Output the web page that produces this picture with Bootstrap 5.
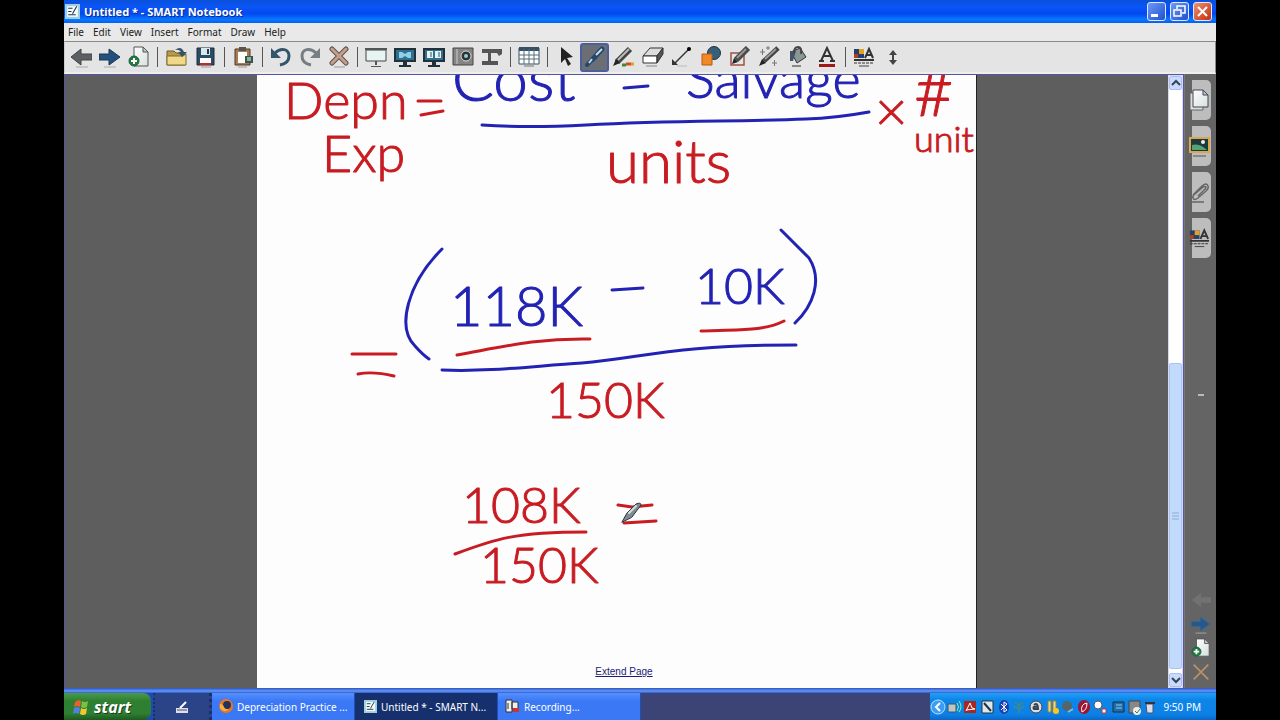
<!DOCTYPE html>
<html lang="en">
<head>
<meta charset="utf-8">
<meta name="viewport" content="width=device-width, initial-scale=1">
<title>Untitled * - SMART Notebook</title>
<link href="https://cdn.jsdelivr.net/npm/bootstrap@5.3.0/dist/css/bootstrap.min.css" rel="stylesheet">
<style>
body{background:#000;font-family:"Open Sans","Liberation Sans",sans-serif;font-size:11px;line-height:16px;padding:0 5%}
button{border:0;padding:0;background:none}
svg{display:block;flex:none}
.titlebar{height:23px;background:linear-gradient(#0a50d8,#0a55f8 30%,#0348f0 60%,#0878ff 85%,#0560f0);color:#fff;padding-left:1px}
.titlebar h1{font:bold 11px/16px "Noto Sans",sans-serif;text-shadow:1px 1px #0a2a90}
.winbtn{width:19px;height:19px;border:1px solid #dfe9ff;border-radius:3px;background:linear-gradient(135deg,#6c9af8,#1f4fd0)}
.winbtn.shut{background:linear-gradient(135deg,#f09070,#c03010)}
.menus{height:18px;background:#e9e9e9;padding-left:4px;gap:9px}
.menus a{color:#222;font:10px/16px "Noto Sans",sans-serif;text-decoration:none}
.toolbar{height:33px;background:#e4e4e4;border:1px solid #8a8a8a;border-left-color:#ccc;border-bottom:2px solid #eee;padding-left:1px}
.tool{width:29px;height:29px;display:flex;align-items:center;justify-content:center;flex:none}
.tool.on{background:#6b6e74;border:2px solid #4a5f9c;border-radius:3px}
.divide{width:8px;flex:none;display:flex;justify-content:center}
.divide.wide{width:9px}
.divide::before{content:"";width:1px;height:20px;background:#555}
.desk{background:#5e5e5e;border:1px solid #5855a5;border-bottom:0}
.sheet{width:720px;background:#fdfdfd;padding-left:16px;border-right:1px solid #222}
.sheet a{color:#1c1c74;font:10px/14px "Liberation Sans",sans-serif;margin-bottom:9px;z-index:1}
.ink{position:absolute;inset:0}
.ink text{font-family:Lato,sans-serif;font-weight:300;stroke-width:1}
.ink .red{fill:#c81c22;stroke:#c81c22}
.ink .blue{fill:#2222b4;stroke:#2222b4}
.scroller{width:15px;background:#fff;border:1px solid #d8d8e8}
.scroller button{width:13px;height:14px;background:#c9dafd;border:1px solid #a8bdf0;border-radius:2px}
.before{flex:275}.thumb{flex:307;background:#c2dafc;border:1px solid #a8c4f5;border-radius:2px}
.side{width:32px;background:#646464;border-left:1px solid #777}
.tabs{gap:6px;padding-top:6px}
.pager{gap:4px;padding:0 5px 6px 0}
.tab{width:19px;height:40px;background:#bdbdbd;border-radius:0 5px 5px 0;margin-right:5px;display:flex;align-items:center;justify-content:flex-end}
.tab svg{margin-right:1px}
.before-grip{flex:136}.after-grip{flex:195}
.grip{width:6px;height:2px;background:#bbb;margin-right:12px}
.taskbar{height:32px;background:linear-gradient(#3560c8 0 1px,#5a8af0 2px 4px,#1c4bb8 5px,#1c4bb8);padding-top:5px;color:#fff}
.start{width:87px;background:linear-gradient(#4a9a4a,#2f7f32 30%,#2f7f32 75%,#1c5a20);border-radius:0 8px 8px 0;color:#fff;font:italic bold 16px/20px "Open Sans",sans-serif;text-shadow:1px 1px #184018}
.quick{width:59px;background:#2b4488;border-left:2px dotted #173070;border-right:3px dotted #173070;margin-left:2px}
.task{width:143px;color:#fff;padding-left:7px;gap:4px;background:linear-gradient(#5590ff,#3b78f5 30%,#3b78f5);font:10px/16px "Noto Sans",sans-serif;border-right:1px solid #2050b8}
.task.now{background:#16306e;padding-left:9px}
.rest{background:#3b4474}
.tray{width:286px;background:linear-gradient(#20a0f8,#0d86e8 25%,#0d80e6 80%,#0a68c8);font:10px/16px "Noto Sans",sans-serif;padding-right:15px}
</style>
</head>
<body class="vh-100 d-flex flex-column overflow-hidden">
<svg width="0" height="0" class="position-absolute" aria-hidden="true">
 <defs>
  <linearGradient id="pg" x2="1" y2="1"><stop stop-color="#fff"/><stop offset="1" stop-color="#d5e0dc"/></linearGradient>
  <symbol id="note" viewBox="0 0 14 14"><path fill="#9dd0dc" d="M0 0h14v14H0z"/><path fill="#f4fbfb" d="M2 2h10v10H2z"/><path fill="none" stroke="#234" stroke-width="1" d="M3 4h4M3 7h3M3 10h7M11 2 7 9"/></symbol>
  <symbol id="arrow" viewBox="0 0 22 22"><path d="M0 8h10V3l11 8-11 8v-5H0z"/><path d="M5 21h12" stroke="#aaa"/></symbol>
  <symbol id="addpage" viewBox="0 0 22 22"><path fill="url(#pg)" stroke="#555" d="M6 1h9l5 5v14H6z"/><path fill="#ccc" stroke="#555" d="M15 1v5h5z"/><circle cx="6" cy="15" r="5" fill="#24783a" stroke="#164"/><path stroke="#fff" stroke-width="2" d="M3 15h6M6 12v6"/></symbol>
  <symbol id="cross" viewBox="0 0 22 22"><path d="m4 3 14 14M18 3 4 17" stroke="#665048" stroke-width="5" stroke-linecap="round"/><path d="m4 3 14 14M18 3 4 17" stroke="#c2a090" stroke-width="3" stroke-linecap="round"/><path d="M6 21h11" stroke="#999"/></symbol>
  <symbol id="props" viewBox="0 0 22 22"><path fill="#24406c" d="M1 3h10v9H1z"/><path fill="#e8a020" d="M6 3h5v5H6z"/><path fill="#b04020" d="M1 8h4v4H1z"/><path fill="none" stroke="#333" stroke-width="2" d="m12 12 4-9 4 9M14 9h5M1 14h20"/><path stroke="#333" stroke-dasharray="3 1" d="M1 17h20"/><path stroke="#444" d="M6 20h10"/></symbol>
  <symbol id="screen" viewBox="0 0 22 22"><path fill="#22303a" d="M0 2h22v14H0zM9 16h4v3H9zM5 19h12v2H5z"/><path fill="#2f7090" d="M2 4h18v10H2z"/></symbol>
 </defs>
</svg>

<header class="titlebar d-flex align-items-center">
 <svg width="15" height="15" class="me-1"><use href="#note"/></svg>
 <h1 class="m-0 flex-grow-1">Untitled * - SMART Notebook</h1>
 <div class="d-flex gap-1 me-1">
  <button class="winbtn" aria-label="Minimize"><svg width="17" height="17"><path fill="#fff" d="M3 11h7v3H3z"/></svg></button>
  <button class="winbtn" aria-label="Restore"><svg width="17" height="17" fill="none" stroke="#fff" stroke-width="1.5"><path d="M6 6V3h8v7h-3M3 7h7v6H3z"/></svg></button>
  <button class="winbtn shut" aria-label="Close"><svg width="17" height="17" stroke="#fff" stroke-width="2"><path d="m4 4 9 9M13 4l-9 9"/></svg></button>
 </div>
</header>
<nav class="menus d-flex align-items-center"><a href="#">File</a><a href="#">Edit</a><a href="#">View</a><a href="#">Insert</a><a href="#">Format</a><a href="#">Draw</a><a href="#">Help</a></nav>

<div class="toolbar d-flex align-items-center" role="toolbar" aria-label="Tools">
 <button class="tool" aria-label="Previous page"><svg width="22" height="22" viewBox="0 0 22 22" fill="#5c6064" stroke="#444"><path d="M22 8H11V3L1 11l10 8v-5h11z"/><path d="M6 21h12" stroke="#aaa"/></svg></button>
 <button class="tool" aria-label="Next page"><svg width="22" height="22" fill="#24507c" stroke="#183858"><use href="#arrow"/></svg></button>
 <button class="tool" aria-label="Add page"><svg width="22" height="22"><use href="#addpage"/></svg></button>
 <span class="divide wide"></span>
 <button class="tool" aria-label="Open"><svg width="22" height="22"><path fill="#b99a48" stroke="#6b5a28" d="M1 5h7l2 2h9v12H1z"/><path fill="#f0d888" stroke="#806a30" d="M1 10h16l3-2v11H1z"/><path fill="#355266" d="M9 4q6-5 9 2h3l-5 5-4-5h3q-2-3-6-2z"/></svg></button>
 <button class="tool" aria-label="Save"><svg width="22" height="22"><path fill="#2c4c66" stroke="#182c40" d="M2 2h17v17H2z"/><path fill="#dbe8ea" d="M6 2h9v7H6z"/><path fill="#23394a" d="M12 3h2v5h-2z"/><path fill="#fff" d="M5 12h11v7H5z"/><path fill="#c22" d="M5 17h11v2H5z"/><path d="M6 21h10" stroke="#999"/></svg></button>
 <span class="divide wide"></span>
 <button class="tool" aria-label="Paste"><svg width="22" height="22"><path fill="#a87c50" stroke="#4a3a2a" d="M2 3h15v16H2z"/><path fill="#fff" d="M5 6h9v11H5z"/><path fill="#555" d="M6 1h7v4H6z"/><path fill="#35584e" d="M12 10h8v7h-8z"/><path stroke="#fff" d="M14 14h4M14 12h4"/><path d="M5 21h9" stroke="#999"/></svg></button>
 <span class="divide"></span>
 <button class="tool" aria-label="Undo"><svg width="22" height="22" fill="none"><path d="M5 7C11 1 19 3 19 10c0 5-4 8-9 9" stroke="#34566c" stroke-width="3"/><path fill="#34566c" d="M1 2v10h10z"/></svg></button>
 <button class="tool" aria-label="Redo"><svg width="22" height="22" fill="none"><path d="M17 7C11 1 3 3 3 10c0 5 4 8 9 9" stroke="#777d80" stroke-width="3"/><path fill="#777d80" d="M21 2v10H11z"/></svg></button>
 <button class="tool" aria-label="Delete"><svg width="22" height="22"><use href="#cross"/></svg></button>
 <span class="divide"></span>
 <button class="tool" aria-label="Screen shade"><svg width="22" height="22"><path fill="#e6f4f2" stroke="#444" d="M1 4h20v11H1z"/><path fill="#555" d="M0 2h22v2H0zM10 15h2v4h-2zM6 20h10v1H6z"/></svg></button>
 <button class="tool" aria-label="Full screen"><svg width="22" height="22"><use href="#screen"/><path fill="#8fd0e4" d="M5 6h12v6H5z"/><path fill="#2f7090" d="M8 6h6l-3 2zM8 12h6l-3-2z"/></svg></button>
 <button class="tool" aria-label="Dual page"><svg width="22" height="22"><use href="#screen"/><path fill="#e8f4f4" d="M4 5h6v7H4zM12 5h6v7h-6z"/><path stroke="#256" d="M8 6v5M16 6v5"/></svg></button>
 <button class="tool" aria-label="Screen capture"><svg width="22" height="22"><path fill="#858585" stroke="#444" d="M1 2h20v17H1z"/><path stroke="#ccc" d="M5 3v15"/><circle cx="14" cy="10" r="5" fill="#2b3238" stroke="#ddd"/><circle cx="14" cy="10" r="2" fill="#9cc"/></svg></button>
 <button class="tool" aria-label="Document camera"><svg width="22" height="22" fill="#555"><path d="M1 3h20v5l-3 2-2-3h-6v8h7v4H1v-4h6V7H1z"/></svg></button>
 <span class="divide"></span>
 <button class="tool" aria-label="Table"><svg width="22" height="22"><path fill="#fff" stroke="#355064" d="M1 2h20v16H1z"/><path fill="#355064" d="M1 1h20v4H1z"/><path stroke="#55707c" d="M1 9h20M1 13h20M6 3v15M11 3v15M16 3v15"/><path d="M6 20h10" stroke="#777"/></svg></button>
 <span class="divide"></span>
 <button class="tool" aria-label="Select"><svg width="22" height="22"><path fill="#222" d="m6 1 12 10-6 1 4 6-3 2-3-7-4 4z"/></svg></button>
 <button class="tool on" aria-label="Pens" aria-pressed="true"><svg width="22" height="22"><path d="M3 19 9 13" stroke="#24486c" stroke-width="4" stroke-linecap="round"/><path d="M9 13 18 3" stroke="#24486c" stroke-width="5" stroke-linecap="round"/><path d="m5 17 3-4M12 9l6-6" stroke="#c8d8e4" stroke-width="2"/></svg></button>
 <button class="tool" aria-label="Creative pens"><svg width="22" height="22"><path d="m4 16 13-13" stroke="#444" stroke-width="6"/><path d="m5 14 11-11" stroke="#bbb" stroke-width="2"/><path fill="#222" d="m0 20 3-7 4 4z"/><path d="M9 19h4" stroke="#3a8a3a" stroke-width="3"/><path d="M13 18h5" stroke="#d05020" stroke-width="3"/><path d="M18 18h3" stroke="#e0a020" stroke-width="3"/></svg></button>
 <button class="tool" aria-label="Eraser"><svg width="22" height="22" stroke="#333"><path fill="#ddd" d="M8 2h13l-6 8H1z"/><path fill="#fff" d="M1 10h14v7H1z"/><path fill="#555" d="m15 10 6-8v6l-6 9z"/><path d="M4 20h11" stroke="#888"/></svg></button>
 <button class="tool" aria-label="Lines"><svg width="22" height="22"><path d="M4 17 18 3" stroke="#333" stroke-width="1.5"/><circle cx="18" cy="3" r="2"/><path d="M1 19v-6l6 6z" fill="#333"/><path d="M6 20h10" stroke="#bbb"/></svg></button>
 <button class="tool" aria-label="Shapes"><svg width="22" height="22"><circle cx="14" cy="7" r="6.500" fill="#35607a" stroke="#234"/><path fill="#f08a28" stroke="#b85a10" d="M2 8h10v11H2z"/></svg></button>
 <button class="tool" aria-label="Shape recognition pen"><svg width="22" height="22"><path fill="none" stroke="#a05040" stroke-width="1.500" d="M2 7h13v12H2z"/><path d="M7 14 19 2" stroke="#4a4a4a" stroke-width="6"/><path d="m8 12 9-9" stroke="#999" stroke-width="2"/><path fill="#222" d="m3 18 2-6 4 4z"/></svg></button>
 <button class="tool" aria-label="Magic pen"><svg width="22" height="22"><path d="M6 15 20 2" stroke="#444" stroke-width="5"/><path d="m7 13 11-10" stroke="#999" stroke-width="2"/><path fill="#222" d="m1 20 3-7 4 4z"/><path fill="none" stroke="#777" d="M2 6h5M4.500 3v6M8 2h4M10 0v4M14 17h5M16.500 14v6"/></svg></button>
 <button class="tool" aria-label="Fill"><svg width="22" height="22"><path fill="#8b9699" stroke="#333" d="m4 6 9-4 6 9-9 6z"/><path fill="#456" d="M3 5h6l-3 10H3z"/><path fill="none" stroke="#444" stroke-width="2" d="M7 7Q7 1 11 1t3 7"/><path d="M5 20h9" stroke="#888" stroke-width="2"/></svg></button>
 <button class="tool" aria-label="Text"><svg width="22" height="22"><path fill="none" stroke="#333" stroke-width="2" d="m5 15 6-13 6 13M8 10h7M3 15h5M14 15h5"/><path fill="#a01818" d="M3 18h16v3H3z"/></svg></button>
 <span class="divide"></span>
 <button class="tool" aria-label="Properties"><svg width="22" height="22"><use href="#props"/></svg></button>
 <button class="tool" aria-label="Move toolbar"><svg width="22" height="22" fill="#444"><path d="m11 4 4 5h-3v5h3l-4 5-4-5h3V9H7z"/></svg></button>
</div>

<main class="flex-grow-1 d-flex" style="min-height:0">
 <div class="desk flex-grow-1 d-flex">
  <div class="flex-grow-1 d-flex justify-content-center">
   <article class="sheet position-relative d-flex flex-column align-items-center justify-content-end">
    <svg class="ink" width="100%" height="100%" viewBox="257 75 719 613" preserveAspectRatio="xMidYMin slice" fill="none" stroke-width="3" stroke-linecap="round" stroke-linejoin="round">
     <g class="red">
      <text x="284" y="119" font-size="52">Depn</text>
      <text x="322" y="172" font-size="52">Exp</text>
      <text x="606" y="183" font-size="60">units</text>
      <text x="875" y="131" font-size="56">×</text>
      <text x="914" y="116" font-size="68">#</text>
      <text x="914" y="152" font-size="36">unit</text>
      <text x="546" y="418" font-size="50">150K</text>
      <text x="462" y="523" font-size="50">108K</text>
      <text x="480" y="583" font-size="50">150K</text>
     </g>
     <g class="blue">
      <text x="452" y="101" font-size="62">Cost</text>
      <text x="686" y="98" font-size="54">Salvage</text>
      <text x="450" y="326" font-size="56">118K</text>
      <text x="695" y="304" font-size="50">10K</text>
     </g>
     <path stroke="#2222b4" d="M482 125q44 3 104 0c90-5 150-3 220-6q30-1 63-7M624 88l24-2M442 249c-34 34-46 78-27 97q8 9 14 13M781 230l28 28c14 22 4 48-14 65M612 290l31-2M442 370c48 2 91-4 140-7 60-5 90-18 214-18"/>
     <path stroke="#c81c22" d="M418 101h23M421 115l22-4M352 354h44M358 374q15-3 36 2M457 355c45-8 80-17 133-16M701 331c35-2 61 1 83-10M455 554c40-15 60-22 131-22M618 505l14 2 20-2M624 523l32-2"/>
     <path fill="#7c8c94" stroke="#333" stroke-width="1" d="m622 522 5-9 9-9q5-2 5 1l-9 12z"/><path stroke="#d5dde0" stroke-width="2" d="m629 513 7-7"/>
    </svg>
    <a href="#">Extend Page</a>
   </article>
  </div>
  <div class="scroller d-flex flex-column align-items-center">
   <button aria-label="Scroll up"><svg width="11" height="12" fill="none" stroke="#345" stroke-width="2"><path d="m2 8 4-4 4 4"/></svg></button>
   <div class="before"></div>
   <div class="thumb w-100 d-flex align-items-center justify-content-center"><svg width="7" height="8" stroke="#8cacd8"><path d="M0 1h7M0 4h7M0 7h7"/></svg></div>
   <button class="mt-1" aria-label="Scroll down"><svg width="11" height="12" fill="none" stroke="#345" stroke-width="2"><path d="m2 4 4 4 4-4"/></svg></button>
  </div>
 </div>
 <aside class="side d-flex flex-column align-items-end">
  <div class="tabs d-flex flex-column">
   <button class="tab" aria-label="Page sorter"><svg width="21" height="24"><path fill="#ddd" stroke="#666" d="M1 5h13v17H1z"/><path fill="url(#pg)" stroke="#445" d="M4 2h10l5 5v12H4z"/><path fill="#bcc" stroke="#445" d="M14 2v5h5z"/></svg></button>
   <button class="tab" aria-label="Gallery"><svg width="21" height="24"><path fill="#1d3a3a" stroke="#d8a850" stroke-width="2" d="M1 4h19v14H1z"/><path fill="#58a078" d="M3 11q7-2 15 5H3z"/><circle cx="14" cy="8" r="2" fill="#eee"/><path d="M4 22h13" stroke="#555"/></svg></button>
   <button class="tab" aria-label="Attachments"><svg width="21" height="24" fill="none" stroke="#666" stroke-width="1.500"><path d="m4 15 9-9q5-4 6 0 1 2-2 5l-8 7q-4 3-5 0-1-2 2-4l8-7q2-1 3 0 0 2-2 3l-6 6"/><path d="M3 22h12"/></svg></button>
   <button class="tab" aria-label="Properties"><svg width="21" height="22"><use href="#props"/></svg></button>
  </div>
  <div class="before-grip"></div>
  <div class="grip"></div>
  <div class="after-grip"></div>
  <div class="pager d-flex flex-column align-items-center">
   <svg width="20" height="20" viewBox="0 0 22 22" fill="#727272"><path d="M22 8H11V3L1 11l10 8v-5h11z"/></svg>
   <button aria-label="Next page"><svg width="20" height="20" fill="#285888" stroke="#3c6c98"><use href="#arrow"/></svg></button>
   <button aria-label="Add page"><svg width="20" height="20"><use href="#addpage"/></svg></button>
   <button aria-label="Delete page"><svg width="20" height="20" viewBox="0 0 22 22" stroke="#b89068" stroke-width="2"><path d="m3 3 16 16M19 3 3 19"/></svg></button>
  </div>
 </aside>
</main>

<footer class="taskbar d-flex align-items-stretch">
 <button class="start d-flex align-items-center gap-1 ps-2"><svg width="18" height="18"><path fill="#e86030" d="M3 4q3-3 6-1L8 9Q5 7 2 9z"/><path fill="#7cc040" d="M10 3q3 2 6 0l-1 6q-3 2-6 0z"/><path fill="#5080e0" d="M2 10q3-2 6 0l-1 6q-3-2-6 0z"/><path fill="#f0c830" d="M9 10q3 2 6 0l-1 6q-3 2-6 0z"/></svg>start</button>
 <div class="quick d-flex align-items-center justify-content-center"><svg width="14" height="14"><path fill="#dde" d="M1 8h12v5H1z"/><path stroke="#fff" stroke-width="2" d="m5 8 6-6"/><path stroke="#456" d="M2 10h10"/></svg></div>
 <button class="task d-flex align-items-center"><svg width="14" height="15"><circle cx="7" cy="7" r="7" fill="#e87820"/><circle cx="8" cy="6" r="4" fill="#26305c"/><path fill="#f8b040" d="M1 5q3 0 4 3t5 2q-5 5-9-1z"/></svg>Depreciation Practice ...</button>
 <button class="task now d-flex align-items-center"><svg width="13" height="13"><use href="#note"/></svg>Untitled * - SMART N...</button>
 <button class="task d-flex align-items-center"><svg width="15" height="15"><path fill="#eee" stroke="#333" d="M1 1h6v12H1zM7 3h6v7H7z"/><path fill="#c33" d="M8 9h6v4H8z"/><path stroke="#333" d="M3 4v6"/></svg>Recording...</button>
 <div class="rest flex-grow-1"></div>
 <div class="tray d-flex align-items-center justify-content-between">
  <svg width="226" height="18" viewBox="0 0 226 18">
   <circle cx="8" cy="9" r="7" fill="#3c9cf4" stroke="#b8e0ff"/><path fill="none" stroke="#fff" stroke-width="2" d="m10 5-4 4 4 4"/>
   <path fill="#b8c8c8" stroke="#456" d="M18 6h8v8h-8z"/><path fill="none" stroke="#7f9" d="M27 5q3 4 0 8M29 3q4 6 0 11"/>
   <path fill="#a82820" d="M34 3h12v12H34z"/><path fill="none" stroke="#fff" d="m36 13 4-8 2 5 3 1-9 1"/>
   <path fill="#dde8e8" stroke="#234" d="M52 3h11v12H52z"/><path stroke="#234" stroke-width="2" d="m54 5 7 8"/>
   <ellipse cx="74" cy="9" rx="5" ry="7" fill="#1840b0"/><path fill="none" stroke="#fff" d="m71 6 6 6-3 2V4l3 2-6 6"/>
   <path fill="none" stroke="#3a8a90" stroke-width="2" d="M85 4q4 5 8 0M89 6v9M84 8q5 5 10 0"/>
   <circle cx="106" cy="9" r="6" fill="#ddd" stroke="#445"/><path fill="none" stroke="#345" stroke-width="2" d="M104 7q4-3 4 4h-4q-2-3 4-2"/>
   <path fill="#e8d890" stroke="#a08028" d="M118 3h3v11h-3zM123 3h3v11h-3z"/><circle cx="126" cy="13" r="3" fill="#f8c820"/>
   <circle cx="137" cy="8" r="5" fill="#566"/><path stroke="#8bc" stroke-width="2" d="m138 14 5-3"/>
   <ellipse cx="154" cy="9" rx="6" ry="7" fill="#a01430"/><path fill="none" stroke="#fff" d="M152 14q-2-8 5-9 0 7-5 9"/>
   <circle cx="168" cy="7" r="4" fill="#fff" stroke="#556"/><path fill="#fff" stroke="#c33" d="M172 11h4v4h-4z"/>
   <path fill="#246ca8" stroke="#134" d="M183 4h11v10h-11z"/><path stroke="#8cf" d="M186 7h6M186 10h6"/>
   <path fill="#888" stroke="#444" d="M199 3h11v12h-11z"/><circle cx="207" cy="13" r="4" fill="#eee"/><path fill="none" stroke="#284" d="m205 13 2 2 3-4"/>
   <path fill="#dde" stroke="#456" d="M216 6h7v9h-6z"/><path stroke="#334" stroke-width="2" d="M215 5h10"/>
  </svg>
  <time>9:50 PM</time>
 </div>
</footer>
<script src="https://cdn.jsdelivr.net/npm/bootstrap@5.3.0/dist/js/bootstrap.bundle.min.js"></script>
</body>
</html>
